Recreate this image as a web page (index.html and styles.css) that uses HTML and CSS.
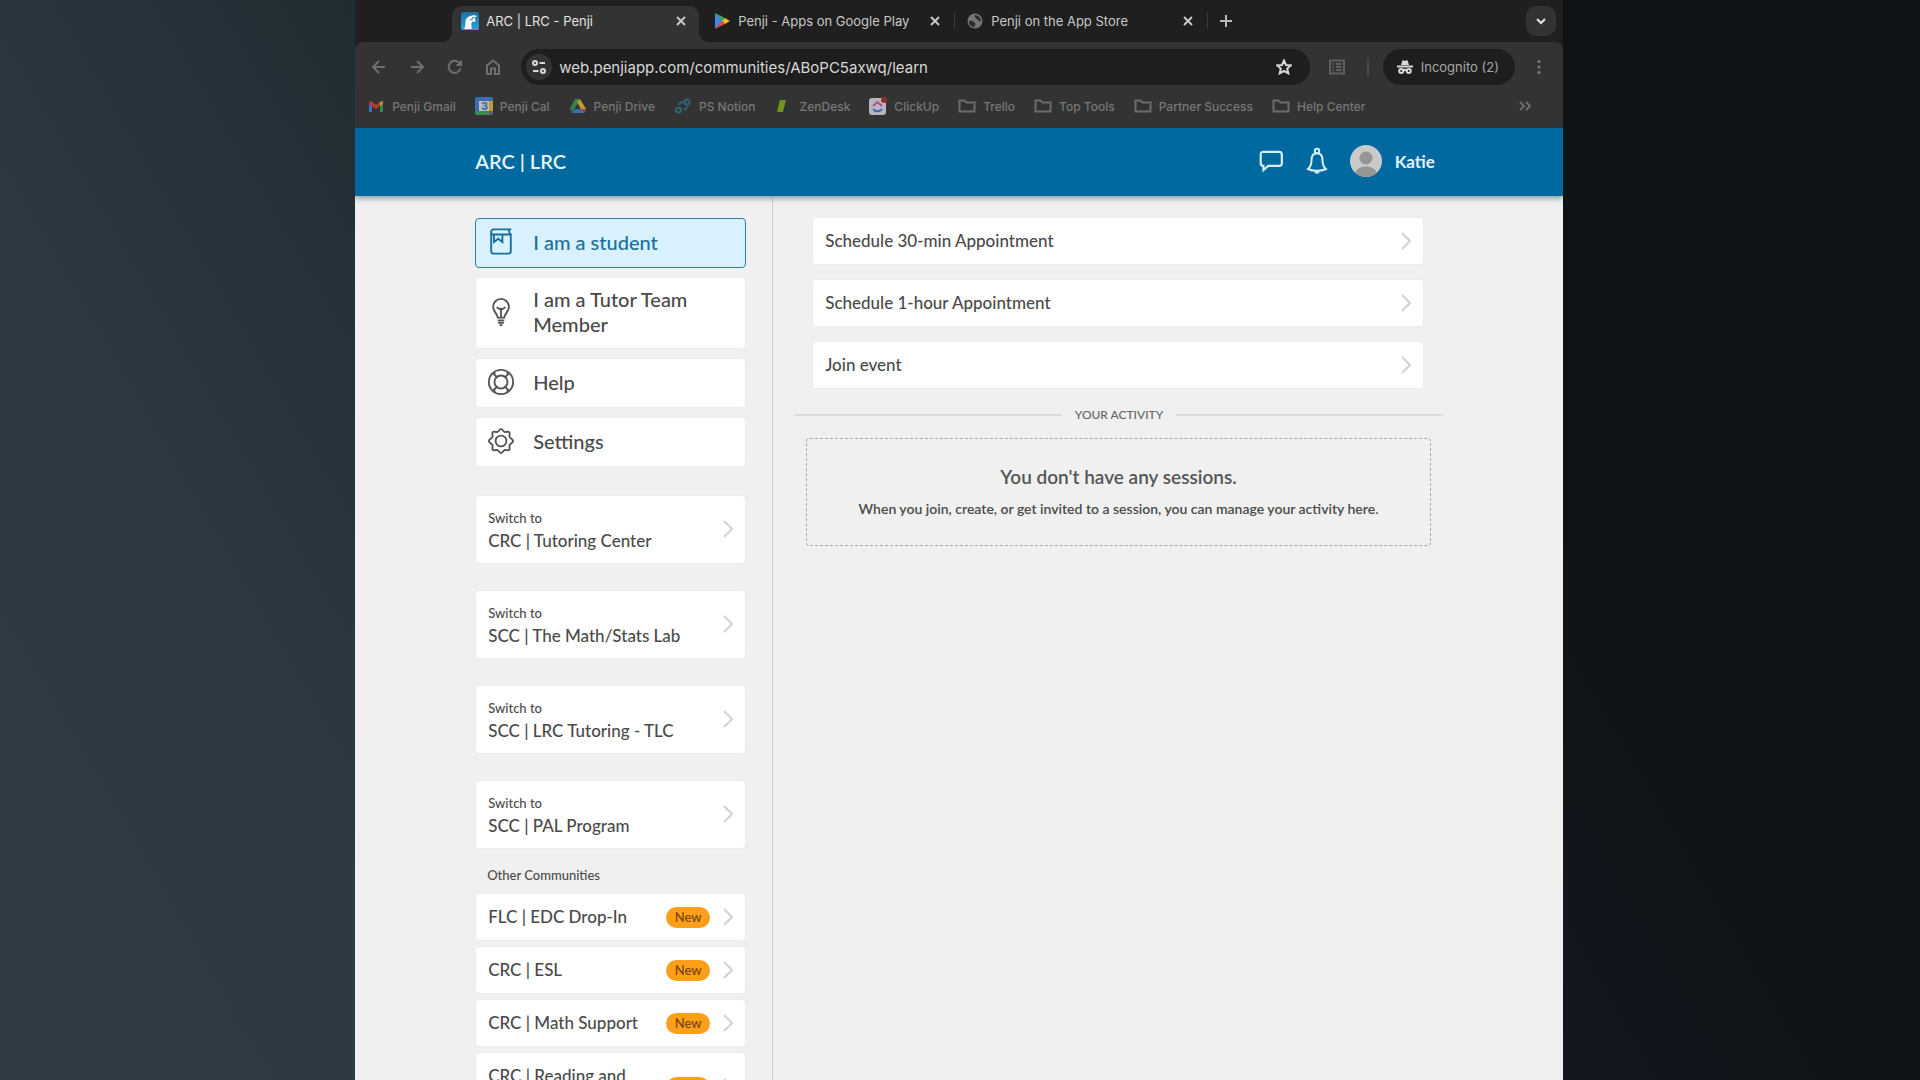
FILE: index.html
```html
<!DOCTYPE html>
<html lang="en">
<head>
  <meta charset="UTF-8" />
  <meta name="viewport" content="width=device-width, initial-scale=1.0" />
  <title>ARC | LRC - Penji</title>
  <link rel="stylesheet" href="styles.css">
</head>
<body>
  <div class="window">
    <!-- Browser tabs -->
    <div class="tabs">
      <div class="tab active">
        <svg class="favicon" viewBox="0 0 18 18">
          <defs><linearGradient id="pj" x1="0" y1="0" x2="0" y2="1"><stop offset="0" stop-color="#1d6f9f"/><stop offset="1" stop-color="#2ba3da"/></linearGradient></defs>
          <rect width="18" height="18" rx="2" fill="url(#pj)"/>
          <path d="M3 17C5 14 4 12 4.500 9 5 5.500 8 4 11 3.500c2-.5 4 0 5 1-1 .3-2 .5-2.500 1 1 1 1.500 3 .5 4.500-1.500-1-3-.5-3.500 1-.5 2 .5 4 0 6z" fill="#f2f8fb"/>
          <path d="M11 6l2.500-.5M9 8l3-1" fill="none" stroke="#2a87b8"/>
        </svg>
        <span class="tab-title">ARC | LRC - Penji</span>
        <button class="close" aria-label="Close tab"><svg viewBox="0 0 10 10"><path d="M1 1l8 8M9 1L1 9"/></svg></button>
      </div>
      <div class="tab">
        <svg class="favicon" viewBox="0 0 18 18">
          <path d="M2 1l8 8-8 8z" fill="#3f86ee"/>
          <path d="M2 1l10 5-3 3z" fill="#35a853"/>
          <path d="M2 17l10-5-3-3z" fill="#e94435"/>
          <path d="M12 6l5 3-5 3-3-3z" fill="#f6b91b"/>
        </svg>
        <span class="tab-title">Penji - Apps on Google Play</span>
        <button class="close" aria-label="Close tab"><svg viewBox="0 0 10 10"><path d="M1 1l8 8M9 1L1 9"/></svg></button>
      </div>
      <div class="tab">
        <svg class="favicon" viewBox="0 0 18 18">
          <circle cx="9" cy="9" r="7.500" fill="#74777a"/>
          <path d="M3 9c2-.5 3.500 0 4.500 1s2 .5 2 2-1 1.500-1 3C5 15 3 12.500 3 9zM9 3c-1 1.500.5 2 1 3.500s2 .5 2.500 2 1.500 1 2.500.5c0-3-2.500-5.500-6-6z" fill="#2a2b2c"/>
        </svg>
        <span class="tab-title">Penji on the App Store</span>
        <button class="close" aria-label="Close tab"><svg viewBox="0 0 10 10"><path d="M1 1l8 8M9 1L1 9"/></svg></button>
      </div>
      <button class="new-tab" aria-label="New tab"><svg viewBox="0 0 12 12"><path d="M6 0v12M0 6h12"/></svg></button>
      <button class="tab-search" aria-label="Search tabs"><svg viewBox="0 0 10 10"><path d="M1 3l4 4 4-4"/></svg></button>
    </div>

    <!-- Toolbar -->
    <div class="toolbar">
      <div class="nav-buttons">
        <button aria-label="Back"><svg viewBox="0 0 16 16"><path d="M14 8H2.500M8 2L2 8l6 6"/></svg></button>
        <button aria-label="Forward"><svg viewBox="0 0 16 16"><path d="M2 8h11.500M8 2l6 6-6 6"/></svg></button>
        <button aria-label="Reload"><svg viewBox="0 0 16 16"><path d="M13.500 9.500A6 6 0 1 1 12.500 4.200L14 6M14 1.500V6H9.500"/></svg></button>
        <button aria-label="Home"><svg viewBox="0 0 16 16"><path d="M2 6.500L8 1.500l6 5V15h-4V9.500H6V15H2z"/></svg></button>
      </div>
      <div class="address">
        <button class="site-info" aria-label="Site information">
          <svg viewBox="0 0 16 16"><circle cx="4" cy="4" r="2"/><path d="M8.500 4H14M2 12h5.500"/><circle cx="12" cy="12" r="2"/></svg>
        </button>
        <input class="url" type="text" aria-label="Address" value="web.penjiapp.com/communities/ABoPC5axwq/learn" />
        <button class="star" aria-label="Bookmark"><svg viewBox="0 0 16 16"><path d="M8 1.500l2 4.500 4.800.400-3.600 3.200 1.100 4.800L8 11.900l-4.300 2.500 1.100-4.800L1.200 6.400 6 6z"/></svg></button>
      </div>
      <button class="reading-list" aria-label="Reading list"><svg viewBox="0 0 16 16"><path d="M1 1.500h14v13H1zM3.500 5h1.500M3.500 8h1.500M3.500 11h1.500M7 5h5.500M7 8h5.500M7 11h5.500"/></svg></button>
      <span class="separator"></span>
      <button class="incognito">
        <svg viewBox="0 0 16 16"><path d="M4 6l1.300-4.300c.2-.5.700-.6 1.100-.4L8 2l1.600-.7c.4-.2.900-.1 1.100.4L12 6z"/><path d="M0 7.500h16"/><circle cx="4.200" cy="12" r="2"/><circle cx="11.800" cy="12" r="2"/><path d="M6.200 11.500c1-.7 2.600-.7 3.600 0"/></svg>
        Incognito (2)
      </button>
      <button class="menu" aria-label="Menu"><svg viewBox="0 0 16 16"><circle cx="8" cy="2.500" r="1.500"/><circle cx="8" cy="8" r="1.500"/><circle cx="8" cy="13.500" r="1.500"/></svg></button>
    </div>

    <!-- Bookmarks bar -->
    <nav class="bookmarks">
      <a href="#"><svg viewBox="0 0 18 18"><path d="M2 15V5l3 2v8z" fill="#3f6fb5"/><path d="M16 15V5l-3 2v8z" fill="#3a8a4d"/><path d="M2 5l2-1 5 4 5-4v4l-5 4-7-5z" fill="#b83c34"/><path d="M13 5l3-1v3l-3 2z" fill="#b9942f"/></svg>Penji Gmail</a>
      <a href="#"><svg viewBox="0 0 18 18"><rect width="18" height="18" rx="2" fill="#3d6cb8"/><path d="M14 4h4v10h-4z" fill="#c29a35"/><path d="M0 14h14v4H2l-2-2z" fill="#3b8a4f"/><path d="M14 14h4l-4 4z" fill="#a63c35"/><path d="M4 4h10v10H4z" fill="#b9bcc0"/><text x="6" y="13" class="cal-day">3</text></svg>Penji Cal</a>
      <a href="#"><svg viewBox="0 0 18 18"><path d="M6 2h5L6 11l-3 5-2-4z" fill="#35864a"/><path d="M11 2l6 10h-5L8 5z" fill="#c29a2d"/><path d="M6 12h11l-2 4H3z" fill="#3c6cb8"/><path d="M1 12h4l-2 4z" fill="#2f6a4a"/><path d="M12 12h5l-2 4z" fill="#b0403a"/></svg>Penji Drive</a>
      <a href="#"><svg viewBox="0 0 18 18" fill="none" stroke="#2f6478" stroke-width="2"><circle cx="4.500" cy="13" r="2.500"/><circle cx="13" cy="5" r="2.500"/><path d="M5 8c1-3 2-3 5-3M13 9c0 2-1 3-3 4"/></svg>PS Notion</a>
      <a href="#"><svg viewBox="0 0 18 18"><path d="M5 3h6L8 15H2z" fill="#6f9420"/><path d="M12 9l4 6h-5z" fill="#1f3b40"/></svg>ZenDesk</a>
      <a href="#"><svg viewBox="0 0 18 18"><rect y="1" width="17" height="17" rx="3" fill="#b9b5bf"/><path d="M4 9l4.500-4L13 9" fill="none" stroke="#b0527e" stroke-width="2"/><path d="M4 12c2 3 7 3 9 0" fill="none" stroke="#4a62b4" stroke-width="2"/><circle cx="15" cy="3" r="3" fill="#8e2f2b"/></svg>ClickUp</a>
      <a href="#"><svg class="folder" viewBox="0 0 18 18"><path d="M1.500 3.500h5l2 2h8v9h-15z"/></svg>Trello</a>
      <a href="#"><svg class="folder" viewBox="0 0 18 18"><path d="M1.500 3.500h5l2 2h8v9h-15z"/></svg>Top Tools</a>
      <a href="#"><svg class="folder" viewBox="0 0 18 18"><path d="M1.500 3.500h5l2 2h8v9h-15z"/></svg>Partner Success</a>
      <a href="#"><svg class="folder" viewBox="0 0 18 18"><path d="M1.500 3.500h5l2 2h8v9h-15z"/></svg>Help Center</a>
      <button class="more" aria-label="More bookmarks"><svg viewBox="0 0 12 12"><path d="M1 2l4 4-4 4M7 2l4 4-4 4"/></svg></button>
    </nav>

    <!-- App header -->
    <header class="app-header">
      <h1>ARC | LRC</h1>
      <div class="header-actions">
        <button aria-label="Messages"><svg viewBox="0 0 24 24"><path d="M4.500 3.500h15a2.500 2.500 0 0 1 2.500 2.500v8a2.500 2.500 0 0 1-2.500 2.500h-10l-4.500 4v-4a2.500 2.500 0 0 1-2.500-2.500V6a2.500 2.500 0 0 1 2-2.500z"/></svg></button>
        <button aria-label="Notifications"><svg class="bell" viewBox="0 0 24 28"><circle cx="12" cy="4" r="2.200"/><path d="M12 6.200c-4 0-5.500 3-5.500 7 0 5-1 6.500-3.500 8.800 5 2.400 13 2.400 18 0-2.500-2.300-3.500-3.800-3.500-8.800 0-4-1.500-7-5.500-7zM10.200 24.500c.4 1.800 3.200 1.800 3.600 0"/></svg></button>
        <button class="profile">
          <svg class="avatar" viewBox="0 0 32 32"><defs><clipPath id="av"><circle cx="16" cy="16" r="16"/></clipPath></defs><g clip-path="url(#av)"><path d="M0 0h32v32H0z" fill="#c9cbca"/><circle cx="16" cy="13" r="6.500" fill="#949694"/><ellipse cx="16" cy="29" rx="11" ry="7.500" fill="#949694"/></g></svg>
          Katie
        </button>
      </div>
    </header>

    <div class="page">
      <aside class="sidebar">
        <nav class="roles">
          <a href="#" class="role selected">
            <svg viewBox="0 0 28 30"><path d="M25 1.500H6a2.500 2.500 0 0 0-2.500 2.500v21a2.500 2.500 0 0 0 2.500 2.500h16a2.500 2.500 0 0 0 2.500-2.500V7H6A2.500 2.500 0 0 1 3.500 4M23 1.500c-1 2 0 4 1.500 5.500M6.500 7v8l4.500-3.500 4.500 3.500V7"/></svg>
            I am a student
          </a>
          <a href="#" class="role">
            <svg viewBox="0 0 28 30"><path d="M10.500 21c0-4-5-6-5-11.500a8.500 8.500 0 0 1 17 0C22.500 15 17.500 17 17.500 21zM10.500 24h7M11 26.500h6M12.500 29h3M14 21v-9M9.500 9.500c1.500 2.500 3 2.500 4.500 2 1.500.5 3 .5 4.500-2"/></svg>
            I am a Tutor Team Member
          </a>
          <a href="#" class="role">
            <svg viewBox="0 0 28 30"><circle cx="14" cy="15" r="13"/><circle cx="14" cy="15" r="7"/><path d="M7.500 4.500l-1 2.500 4 3.500M20.500 4.500l1 2.500-4 3.500M7.500 25.500l-1-2.500 4-3.500M20.500 25.500l1-2.500-4-3.500"/></svg>
            Help
          </a>
          <a href="#" class="role">
            <svg viewBox="0 0 28 30"><circle cx="14" cy="15" r="5.800"/><path d="M14 2c1.500 0 2 2.500 3.800 3.200 1.800.7 3.800-.8 5 .3 1.200 1.200-.3 3.200.4 5 .7 1.800 3.800 2.700 3.800 4.500s-3.100 2.700-3.800 4.500c-.7 1.800.8 3.800-.4 5-1.200 1.100-3.200-.4-5 .3C16 25.500 15.500 28 14 28s-2-2.500-3.800-3.200c-1.800-.7-3.800.8-5-.3-1.200-1.200.3-3.200-.4-5C4.100 17.700 1 16.800 1 15s3.100-2.700 3.800-4.500c.7-1.800-.8-3.800.4-5 1.200-1.100 3.200.4 5-.3C12 4.500 12.500 2 14 2z"/></svg>
            Settings
          </a>
        </nav>

        <nav class="switches">
          <a href="#" class="switch"><span><small>Switch to</small>CRC | Tutoring Center</span><svg class="arrow" viewBox="0 0 10 18"><path d="M1 1l8 8-8 8"/></svg></a>
          <a href="#" class="switch"><span><small>Switch to</small>SCC | The Math/Stats Lab</span><svg class="arrow" viewBox="0 0 10 18"><path d="M1 1l8 8-8 8"/></svg></a>
          <a href="#" class="switch"><span><small>Switch to</small>SCC | LRC Tutoring - TLC</span><svg class="arrow" viewBox="0 0 10 18"><path d="M1 1l8 8-8 8"/></svg></a>
          <a href="#" class="switch"><span><small>Switch to</small>SCC | PAL Program</span><svg class="arrow" viewBox="0 0 10 18"><path d="M1 1l8 8-8 8"/></svg></a>
        </nav>

        <h2 class="other-title">Other Communities</h2>
        <nav class="communities">
          <a href="#" class="community"><span class="name">FLC | EDC Drop-In</span><span class="badge">New</span><svg class="arrow" viewBox="0 0 10 18"><path d="M1 1l8 8-8 8"/></svg></a>
          <a href="#" class="community"><span class="name">CRC | ESL</span><span class="badge">New</span><svg class="arrow" viewBox="0 0 10 18"><path d="M1 1l8 8-8 8"/></svg></a>
          <a href="#" class="community"><span class="name">CRC | Math Support</span><span class="badge">New</span><svg class="arrow" viewBox="0 0 10 18"><path d="M1 1l8 8-8 8"/></svg></a>
          <a href="#" class="community"><span class="name">CRC | Reading and Writing</span><span class="badge">New</span><svg class="arrow" viewBox="0 0 10 18"><path d="M1 1l8 8-8 8"/></svg></a>
        </nav>
      </aside>

      <main class="content">
        <div class="actions">
          <a href="#" class="action">Schedule 30-min Appointment<svg class="arrow" viewBox="0 0 10 18"><path d="M1 1l8 8-8 8"/></svg></a>
          <a href="#" class="action">Schedule 1-hour Appointment<svg class="arrow" viewBox="0 0 10 18"><path d="M1 1l8 8-8 8"/></svg></a>
          <a href="#" class="action">Join event<svg class="arrow" viewBox="0 0 10 18"><path d="M1 1l8 8-8 8"/></svg></a>
        </div>
        <h2 class="activity-title">YOUR ACTIVITY</h2>
        <section class="empty">
          <h3>You don't have any sessions.</h3>
          <p>When you join, create, or get invited to a session, you can manage your activity here.</p>
        </section>
      </main>
    </div>
  </div>
</body>
</html>
```
FILE: styles.css
```css
* {
  box-sizing: border-box;
}
body {
  margin: 0;
  height: 100vh;
  overflow: hidden;
  padding: 0 18.6% 0 18.5%;
  background: linear-gradient(60deg, #303c44 0%, #2e3a43 18%, #212b32 39%, #12181e 62%, #0d1316 74%);
  font-family: Lato, "Open Sans", sans-serif;
  font-weight: 500;
  color: #4a4a4a;
}
button {
  display: flex;
  align-items: center;
  justify-content: center;
  padding: 0;
  border: none;
  background: none;
  font: inherit;
  color: inherit;
  cursor: pointer;
}
a {
  color: inherit;
  text-decoration: none;
}
.window {
  height: 100%;
  display: flex;
  flex-direction: column;
  overflow: hidden;
  background: linear-gradient(#1f1f1f 60px, #f0f0f0 60px);
}

/* Browser */
.tabs,
.toolbar,
.bookmarks {
  display: flex;
  align-items: center;
  flex: none;
  font-family: Inter, sans-serif;
  font-size: 13px;
  font-weight: 400;
}
.tabs {
  height: 42px;
  padding: 0 7px 0 97px;
  background-color: #1f1f1f;
  color: #c8c8c8;
}
.tab {
  display: flex;
  align-items: center;
  width: 253px;
  height: 36px;
  align-self: flex-end;
  padding: 0 14px 6px 11px;
}
.tab + .tab {
  background: linear-gradient(#3a3a3a, #3a3a3a) no-repeat right 7px / 1px 16px;
}
.tab.active {
  position: relative;
  width: 247px;
  margin-right: 3px;
  padding: 0 12px 6px 9px;
  background-color: #333333;
  border-radius: 10px 10px 0 0;
  color: #e3e3e3;
}
/* curved feet of the active tab */
.tab.active::before,
.tab.active::after {
  content: "";
  position: absolute;
  bottom: 0;
  width: 10px;
  height: 10px;
}
.tab.active::before {
  right: 100%;
  background: radial-gradient(circle at 0 0, transparent 10px, #333333 10px);
}
.tab.active::after {
  left: 100%;
  background: radial-gradient(circle at 100% 0, transparent 10px, #333333 10px);
}
.favicon {
  width: 18px;
  height: 18px;
  margin-right: 7px;
}
.tab-title {
  flex: 1;
}
.tabs svg,
.toolbar svg,
.more svg {
  flex: none;
}
.close svg {
  width: 10px;
  height: 10px;
  fill: none;
  stroke: #c8c8c8;
  stroke-width: 2;
}
.close {
  width: 12px;
}
.new-tab {
  margin-left: 12px;
}
.new-tab svg {
  width: 12px;
  height: 12px;
  stroke: #b8b8b8;
  stroke-width: 2;
}
.tab-search {
  width: 30px;
  height: 30px;
  margin-left: auto;
  border-radius: 10px;
  background-color: #333333;
}
.tab-search svg {
  width: 10px;
  height: 10px;
  fill: none;
  stroke: #e3e3e3;
  stroke-width: 2;
}
.toolbar {
  height: 50px;
  padding: 0 15px;
  border-radius: 8px 8px 0 0;
  background-color: #333333;
}
.nav-buttons {
  display: flex;
  gap: 20px;
}
.toolbar svg {
  width: 16px;
  height: 16px;
  fill: none;
  stroke: #6f6f6f;
  stroke-width: 2;
}
.nav-buttons button {
  width: 18px;
}
.address {
  flex: 1;
  display: flex;
  align-items: center;
  height: 36px;
  margin-left: 19px;
  padding: 0 18px 0 5px;
  border-radius: 18px;
  background-color: #1e1e1e;
}
.site-info {
  width: 26px;
  height: 26px;
  border-radius: 13px;
  background-color: #333333;
}
.toolbar .site-info svg,
.toolbar .star svg,
.toolbar .incognito svg {
  stroke: #d8d8d8;
}
.toolbar .reading-list svg {
  stroke: #5f5f5f;
}
.url {
  flex: 1;
  margin-left: 7px;
  padding: 0;
  border: none;
  outline: none;
  background: none;
  color: #d8d8d8;
  font-family: Inter, sans-serif;
  font-size: 15px;
}
.reading-list {
  margin-left: 19px;
}
.separator {
  width: 2px;
  height: 18px;
  margin: 0 14px 0 22px;
  background-color: #484848;
}
.incognito {
  gap: 8px;
  height: 36px;
  padding: 0 16px 0 14px;
  border-radius: 18px;
  background-color: #1e1e1e;
  color: #a8a8a8;
}
.toolbar .incognito svg path:first-child {
  fill: #d8d8d8;
  stroke: none;
}
.menu {
  margin-left: 16px;
  margin-right: 1px;
}
.toolbar .menu svg {
  fill: #7c7c7c;
  stroke: none;
}
.bookmarks {
  height: 36px;
  padding: 0 32px 8px 12px;
  gap: 19px;
  background-color: #333333;
  color: #777777;
  font-size: 12px;
  font-weight: 500;
}
.bookmarks a {
  display: flex;
  align-items: center;
  gap: 7px;
  white-space: nowrap;
}
.bookmarks a svg {
  width: 18px;
  height: 18px;
}
.cal-day {
  font-size: 11px;
  font-weight: 700;
  fill: #3d5f9c;
}
.bookmarks .folder,
.more svg {
  fill: none;
  stroke: #6c6c6c;
  stroke-width: 2;
}
.more {
  margin-left: auto;
}
.more svg {
  width: 12px;
  height: 12px;
}

/* App header */
.app-header {
  display: flex;
  align-items: center;
  justify-content: space-between;
  flex: none;
  z-index: 1;
  height: 68px;
  padding: 0 128px 2px 120px;
  background-color: #00699f;
  box-shadow: 0 2px 6px rgba(0, 60, 90, 0.5);
  color: #e4f5fd;
}
.app-header h1 {
  margin: 0;
  font-size: 20px;
  font-weight: 600;
}
.header-actions {
  display: flex;
  align-items: center;
  gap: 20px;
}
.header-actions svg {
  width: 26px;
  height: 26px;
  fill: none;
  stroke: #d3effb;
  stroke-width: 2;
}
.header-actions .bell {
  height: 28px;
}
.profile {
  gap: 13px;
  font-size: 17px;
  font-weight: 700;
}
.header-actions .avatar {
  width: 32px;
  height: 32px;
  stroke: none;
}

/* Sidebar */
.page {
  flex: 1;
  display: flex;
  min-height: 0;
}
.sidebar {
  flex: none;
  width: 418px;
  padding: 22px 26px 0 120px;
  border-right: 1px solid #d0d0d0;
}
.roles,
.switches,
.communities,
.actions {
  display: flex;
  flex-direction: column;
}
.role,
.switch,
.community,
.action {
  display: flex;
  align-items: center;
  border: 1px solid #ececec;
  border-radius: 4px;
  background-color: #ffffff;
  font-size: 17px;
  line-height: 22px;
}
.roles {
  gap: 9px;
}
.role {
  min-height: 50px;
  padding: 9px 40px 11px 11px;
  gap: 18px;
  font-size: 20px;
  line-height: 25px;
}
.role svg {
  flex: none;
  width: 28px;
  height: 28px;
  fill: none;
  stroke: #555555;
  stroke-width: 2;
}
.role.selected {
  border-color: #2a7fa8;
  background-color: #d9f0fd;
  color: #17719d;
}
.role.selected svg {
  stroke: #17719d;
}
.switches {
  gap: 26px;
  margin-top: 28px;
}
.switch {
  min-height: 69px;
  padding: 8px 12px 10px;
  justify-content: space-between;
}
.switch small {
  display: block;
  font-size: 13px;
  line-height: 24px;
}
.arrow {
  flex: none;
  width: 10px;
  height: 18px;
  fill: none;
  stroke: #d2d2d2;
  stroke-width: 2;
}
.other-title {
  margin: 16px 12px 8px;
  font-size: 13px;
  line-height: 20px;
  font-weight: 500;
}
.communities {
  gap: 5px;
}
.community {
  min-height: 48px;
  padding: 12px;
}
.community .name {
  flex: 1;
}
.badge {
  width: 44px;
  margin-right: 13px;
  border-radius: 11px;
  background-color: #fd9f19;
  color: #7a430a;
  font-size: 13px;
  line-height: 21px;
  text-align: center;
}

/* Main column */
.content {
  flex: 1;
  padding: 21px 120px 0 22px;
}
.actions {
  gap: 14px;
  margin: 0 19px 0 17px;
}
.action {
  min-height: 48px;
  padding: 12px;
  justify-content: space-between;
}
.activity-title {
  display: flex;
  align-items: center;
  gap: 13px;
  margin: 16px 0 13px;
  font-size: 12px;
  line-height: 20px;
  font-weight: 500;
  color: #666666;
}
.activity-title::before,
.activity-title::after {
  content: "";
  flex: 1;
  height: 2px;
  background-color: #dcdcdc;
}
.empty {
  margin: 0 12px 0 11px;
  padding: 25px 20px 26px;
  border: 1px dashed #a8a8a8;
  border-radius: 4px;
  text-align: center;
}
.empty h3 {
  margin: 0 0 9px;
  font-size: 19px;
  line-height: 26px;
  font-weight: 600;
  color: #555555;
}
.empty p {
  margin: 0;
  font-size: 14px;
  line-height: 20px;
  font-weight: 600;
}
```
